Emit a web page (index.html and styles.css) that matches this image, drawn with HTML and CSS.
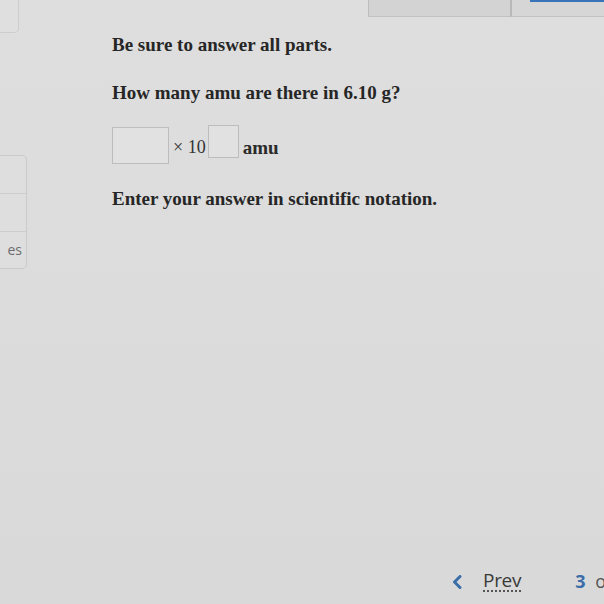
FILE: index.html
```html
<!DOCTYPE html>
<html>
<head>
<meta charset="utf-8">
<link rel="stylesheet" href="styles.css">
</head>
<body>
<div class="page">
  <header class="top">
    <div class="corner"></div>
    <div class="tabs">
      <div class="tab"></div>
      <div class="tab tab-active"></div>
    </div>
  </header>
  <div class="middle">
    <aside class="side">
      <div class="side-cell"></div>
      <div class="side-cell"></div>
      <div class="side-cell side-label">es</div>
    </aside>
    <main class="content">
      <p class="line first">Be sure to answer all parts.</p>
      <p class="line second">How many amu are there in 6.10 g?</p>
      <div class="answer">
        <span class="box box-main"></span>
        <span class="times">× 10</span>
        <span class="box box-exp"></span>
        <span class="unit">amu</span>
      </div>
      <p class="line hint">Enter your answer in scientific notation.</p>
    </main>
  </div>
  <footer class="bottom">
    <span class="chev">
      <svg width="10" height="14" viewBox="0 0 10 14"><path d="M8 1.5 L2.5 7 L8 12.5" fill="none" stroke="#3b6ea8" stroke-width="3" stroke-linecap="round" stroke-linejoin="round"/></svg>
    </span>
    <span class="prev">Prev</span>
    <span class="pagenum"><b>3</b> o</span>
  </footer>
</div>
</body>
</html>
```
FILE: styles.css
```css
html, body {
  margin: 0;
  padding: 0;
}
body {
  width: 604px;
  height: 604px;
  overflow: hidden;
  background: linear-gradient(180deg, #dedede 0%, #dcdcdc 50%, #d9d9d9 100%);
  font-family: "Liberation Serif", "Times New Roman", serif;
  color: #222;
}
.page {
  height: 604px;
  display: flex;
  flex-direction: column;
}
.top {
  display: flex;
  justify-content: space-between;
  align-items: flex-start;
  height: 33px;
}
.corner {
  width: 18px;
  height: 32px;
  border-right: 1px solid #cdcdcd;
  border-bottom: 1px solid #cdcdcd;
  border-bottom-right-radius: 5px;
  background: #dfdfdf;
}
.tabs {
  display: flex;
  width: 236px;
  height: 16px;
}
.tab {
  width: 141px;
  height: 16px;
  background: #d3d3d3;
  border-left: 1px solid #bdbdbd;
  border-bottom: 1px solid #c2c2c2;
}
.tab-active {
  flex: 1;
  border-left: 2px solid #b8b8b8;
  background: #d6d6d6;
}
.tab-active::before {
  content: "";
  display: block;
  margin-left: 18px;
  height: 2px;
  background: #3a74b8;
}
.middle {
  display: flex;
  flex: 1;
}
.side {
  width: 26px;
  margin-top: 122px;
  height: 112px;
  display: flex;
  flex-direction: column;
  border: 1px solid #cacaca;
  border-left: none;
  border-radius: 0 5px 5px 0;
  background: #dedede;
}
.side-cell {
  height: 37px;
  border-bottom: 1px solid #cdcdcd;
}
.side-cell:last-child {
  border-bottom: none;
  flex: 1;
}
.side-label {
  font-family: "Open Sans", "DejaVu Sans", sans-serif;
  font-size: 14px;
  color: #6d6d6d;
  display: flex;
  align-items: center;
  justify-content: flex-end;
  padding-right: 4px;
  overflow: hidden;
  margin-top: -2px;
}
.content {
  padding-left: 85px;
}
.line {
  margin: 0;
  font-weight: bold;
  font-size: 19px;
  line-height: 22px;
  color: #262626;
}
.first {
  margin-top: 1px;
}
.second {
  margin-top: 26px;
}
.answer {
  display: flex;
  align-items: flex-start;
  margin-top: 21px;
  height: 38px;
}
.box {
  display: block;
  border: 1px solid #bdbdbd;
  background: #e1e1e1;
}
.box-main {
  width: 55px;
  height: 35px;
  margin-top: 2px;
}
.box-exp {
  width: 29px;
  height: 31px;
}
.times {
  font-size: 18px;
  line-height: 20px;
  margin-top: 12px;
  margin-left: 4px;
  margin-right: 2px;
  color: #333;
}
.unit {
  font-weight: bold;
  font-size: 19px;
  line-height: 22px;
  margin-top: 12px;
  margin-left: 4px;
  color: #2a2a2a;
}
.hint {
  margin-top: 25px;
}
.bottom {
  display: flex;
  align-items: center;
  height: 46px;
  padding-left: 452px;
  font-family: "Open Sans", "DejaVu Sans", sans-serif;
  overflow: hidden;
  white-space: nowrap;
}
.chev {
  display: flex;
  width: 10px;
  margin-top: 2px;
}
.prev {
  margin-left: 21px;
  font-size: 19px;
  color: #3a3a3a;
  border-bottom: 2px dotted #555;
  line-height: 19px;
  letter-spacing: -0.3px;
}
.pagenum {
  margin-left: 54px;
  font-size: 18px;
  color: #555;
}
.pagenum b {
  color: #3b6ea8;
  margin-right: 5px;
}
```
